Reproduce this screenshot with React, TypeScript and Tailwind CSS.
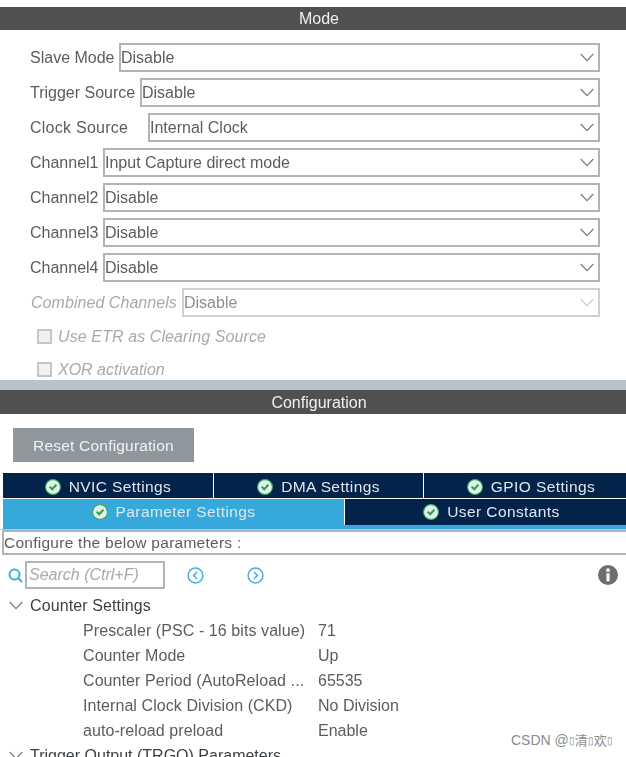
interface SelectRowProps {
  label: string;
  value: string;
  left: string;
  disabled?: boolean;
}

const rows: SelectRowProps[] = [
  { label: "Slave Mode", value: "Disable", left: "w-[89px]" },
  { label: "Trigger Source", value: "Disable", left: "w-[110px]" },
  { label: "Clock Source", value: "Internal Clock", left: "w-[118px] tracking-[0.25px]" },
  { label: "Channel1", value: "Input Capture direct mode", left: "w-[73px]" },
  { label: "Channel2", value: "Disable", left: "w-[73px]" },
  { label: "Channel3", value: "Disable", left: "w-[73px]" },
  { label: "Channel4", value: "Disable", left: "w-[73px]" },
  { label: "Combined Channels", value: "Disable", left: "w-[152px] pl-[1px] tracking-[0.05px]", disabled: true },
];

const params = [
  { label: "Prescaler (PSC - 16 bits value)", value: "71" },
  { label: "Counter Mode", value: "Up" },
  { label: "Counter Period (AutoReload ...", value: "65535" },
  { label: "Internal Clock Division (CKD)", value: "No Division" },
  { label: "auto-reload preload", value: "Enable" },
];

function Chevron({ className }: { className: string }) {
  return (
    <svg width="14" height="9" viewBox="0 0 14 9" className={`shrink-0 ${className}`}>
      <path d="M0.7 1 7 7.6 13.3 1" fill="none" stroke="currentColor" strokeWidth="1.1" />
    </svg>
  );
}

function SelectRow({ label, value, left, disabled }: SelectRowProps) {
  return (
    <div className="flex h-[29px] items-center">
      <span
        className={`${left} shrink-0 whitespace-nowrap text-[16px] ${disabled ? "italic text-[#a9a9a9]" : "text-[#5a5d60]"}`}
      >
        {label}
      </span>
      <div
        className={`flex h-[29px] flex-1 items-center justify-between border-2 bg-white pr-[4px] text-[16px] ${disabled ? "border-[#ced1d4] text-[#8c8f92]" : "border-[#b0b4b8] text-[#5a5d60]"}`}
      >
        <span>{value}</span>
        <Chevron className={disabled ? "text-[#c9cccf]" : "text-[#73777a]"} />
      </div>
    </div>
  );
}

function Check({ size = 16 }: { size?: number }) {
  return (
    <svg width={size} height={size} viewBox="0 0 16 16" className="shrink-0">
      <circle cx="8" cy="8" r="7.4" fill="#ffffff" stroke="#3fa564" strokeWidth="1.2" />
      <circle cx="8" cy="8" r="6" fill="#dff1e6" />
      <path d="M4.6 7.6 7.2 10.2 11.4 5.8" fill="none" stroke="#2f9a58" strokeWidth="2" />
    </svg>
  );
}

function Tab({ label, className }: { label: string; className: string }) {
  return (
    <div className={`flex items-center justify-center gap-[8px] text-[15.5px] tracking-[0.4px] text-[#dfe6ec] ${className}`}>
      <Check />
      <span>{label}</span>
    </div>
  );
}

function ArrowCircle({ dir }: { dir: "left" | "right" }) {
  return (
    <svg width="17" height="17" viewBox="0 0 17 17">
      <circle cx="8.5" cy="8.5" r="7.4" fill="none" stroke="#45aee0" strokeWidth="1.5" />
      <path
        d={dir === "left" ? "M10 5 6.6 8.5 10 12" : "M7 5 10.4 8.5 7 12"}
        fill="none"
        stroke="#45aee0"
        strokeWidth="1.5"
      />
    </svg>
  );
}

export default function App() {
  return (
    <div className="relative h-[757px] w-[626px] overflow-hidden bg-white font-['Liberation_Sans',Arial,sans-serif]">
      {/* the panel runs on past the right edge of the window */}
      <div className="w-[638px] blur-[0.35px]">
        <div className="mt-[7px] flex h-[23px] items-center justify-center bg-[#4f5051] text-[16px] text-[#f0f0f0]">
          Mode
        </div>

        <div className="flex flex-col gap-[6px] pl-[30px] pr-[38px] pt-[13px]">
          {rows.map((r) => (
            <SelectRow key={r.label} {...r} />
          ))}
        </div>

        <div className="mt-[12px] flex h-[15px] items-center gap-[6px] pl-[37px]">
          <div className="h-[15px] w-[15px] border-2 border-[#c4c7ca] bg-[#f1f1f1]" />
          <span className="text-[16px] italic tracking-[0.1px] text-[#a9a9a9]">Use ETR as Clearing Source</span>
        </div>
        <div className="mt-[18px] flex h-[15px] items-center gap-[6px] pl-[37px]">
          <div className="h-[15px] w-[15px] border-2 border-[#c4c7ca] bg-[#f1f1f1]" />
          <span className="text-[16px] italic text-[#a9a9a9]">XOR activation</span>
        </div>

        <div className="mt-[3px] h-[10px] bg-[#b8c4ca]" />
        <div className="flex h-[24px] items-center justify-center bg-[#4f5051] pt-[1px] text-[16px] text-[#f0f0f0]">
          Configuration
        </div>

        <div className="ml-[13px] mt-[14px] flex h-[34px] w-[181px] items-center justify-center bg-[#90979c] pt-[2px] text-[15.5px] tracking-[0.2px] text-[#f0f2f3]">
          Reset Configuration
        </div>

        <div className="ml-[3px] mt-[11px]">
          <div className="flex h-[25px]">
            <Tab label="NVIC Settings" className="w-[210px] bg-[#03234b] pt-[2px]" />
            <Tab label="DMA Settings" className="ml-[1px] w-[209px] bg-[#03234b] pt-[2px]" />
            <Tab label="GPIO Settings" className="ml-[1px] flex-1 bg-[#03234b] pt-[2px]" />
          </div>
          <div className="mt-[1px] flex h-[26px]">
            <Tab label="Parameter Settings" className="w-[341px] bg-[#36a9dc]" />
            <Tab label="User Constants" className="ml-[1px] flex-1 bg-[#03234b]" />
          </div>
        </div>
        <div className="ml-[3px] h-[4px] bg-[#36a9dc]" />
        <div className="h-[1px] bg-[#b8c4ca]" />

        <div className="ml-[2px] flex h-[25px] items-center border-y-2 border-l-2 border-[#b0b4b8] pt-[1px] text-[15.5px] tracking-[0.26px] text-[#5a5d60]">
          Configure the below parameters :
        </div>

        <div className="mt-[6px] flex h-[28px] items-center pl-[7px]">
          <svg width="17" height="17" viewBox="0 0 17 17" className="shrink-0">
            <circle cx="7.5" cy="7.5" r="5" fill="none" stroke="#45aee0" strokeWidth="2" />
            <path d="M11 11 15 15" stroke="#45aee0" strokeWidth="2.2" />
          </svg>
          <div className="ml-[1px] flex h-[28px] w-[140px] items-center border-2 border-[#b0b4b8] pl-[2px] text-[16px] italic text-[#a9a9a9]">
            Search (Ctrl+F)
          </div>
          <div className="ml-[22px]">
            <ArrowCircle dir="left" />
          </div>
          <div className="ml-[43px]">
            <ArrowCircle dir="right" />
          </div>
          <svg width="20" height="20" viewBox="0 0 20 20" className="ml-auto mr-[20px]">
            <circle cx="10" cy="10" r="10" fill="#6d6d6d" />
            <circle cx="10" cy="5.2" r="1.9" fill="#ffffff" />
            <rect x="8.4" y="8.2" width="3.2" height="8.2" fill="#ffffff" />
          </svg>
        </div>

        <div className="mt-[4px] flex h-[25px] items-center gap-[7px] pl-[9px] text-[16px] tracking-[0.1px] text-[#3c3f42]">
          <Chevron className="text-[#73777a]" />
          Counter Settings
        </div>
        {params.map((p) => (
          <div key={p.label} className="flex h-[25px] items-center pl-[83px] text-[16px] text-[#5a5d60]">
            <span className="w-[235px] shrink-0 whitespace-nowrap tracking-[0.08px]">{p.label}</span>
            <span>{p.value}</span>
          </div>
        ))}
        <div className="flex h-[25px] items-center gap-[7px] pl-[9px] text-[16px] text-[#3c3f42]">
          <Chevron className="text-[#73777a]" />
          Trigger Output (TRGO) Parameters
        </div>
      </div>

      <div className="absolute left-[511px] top-[730px] flex items-center font-['Liberation_Sans','Noto_Sans_CJK_SC',sans-serif] text-[14px] text-[#8b8b8b]">
        <span>CSDN @</span>
        <span className="text-[10px]">▯</span>
        <span className="text-[13px]">清</span>
        <span className="text-[10px]">▯</span>
        <span className="text-[13px]">欢</span>
        <span className="text-[10px]">▯</span>
      </div>
    </div>
  );
}
